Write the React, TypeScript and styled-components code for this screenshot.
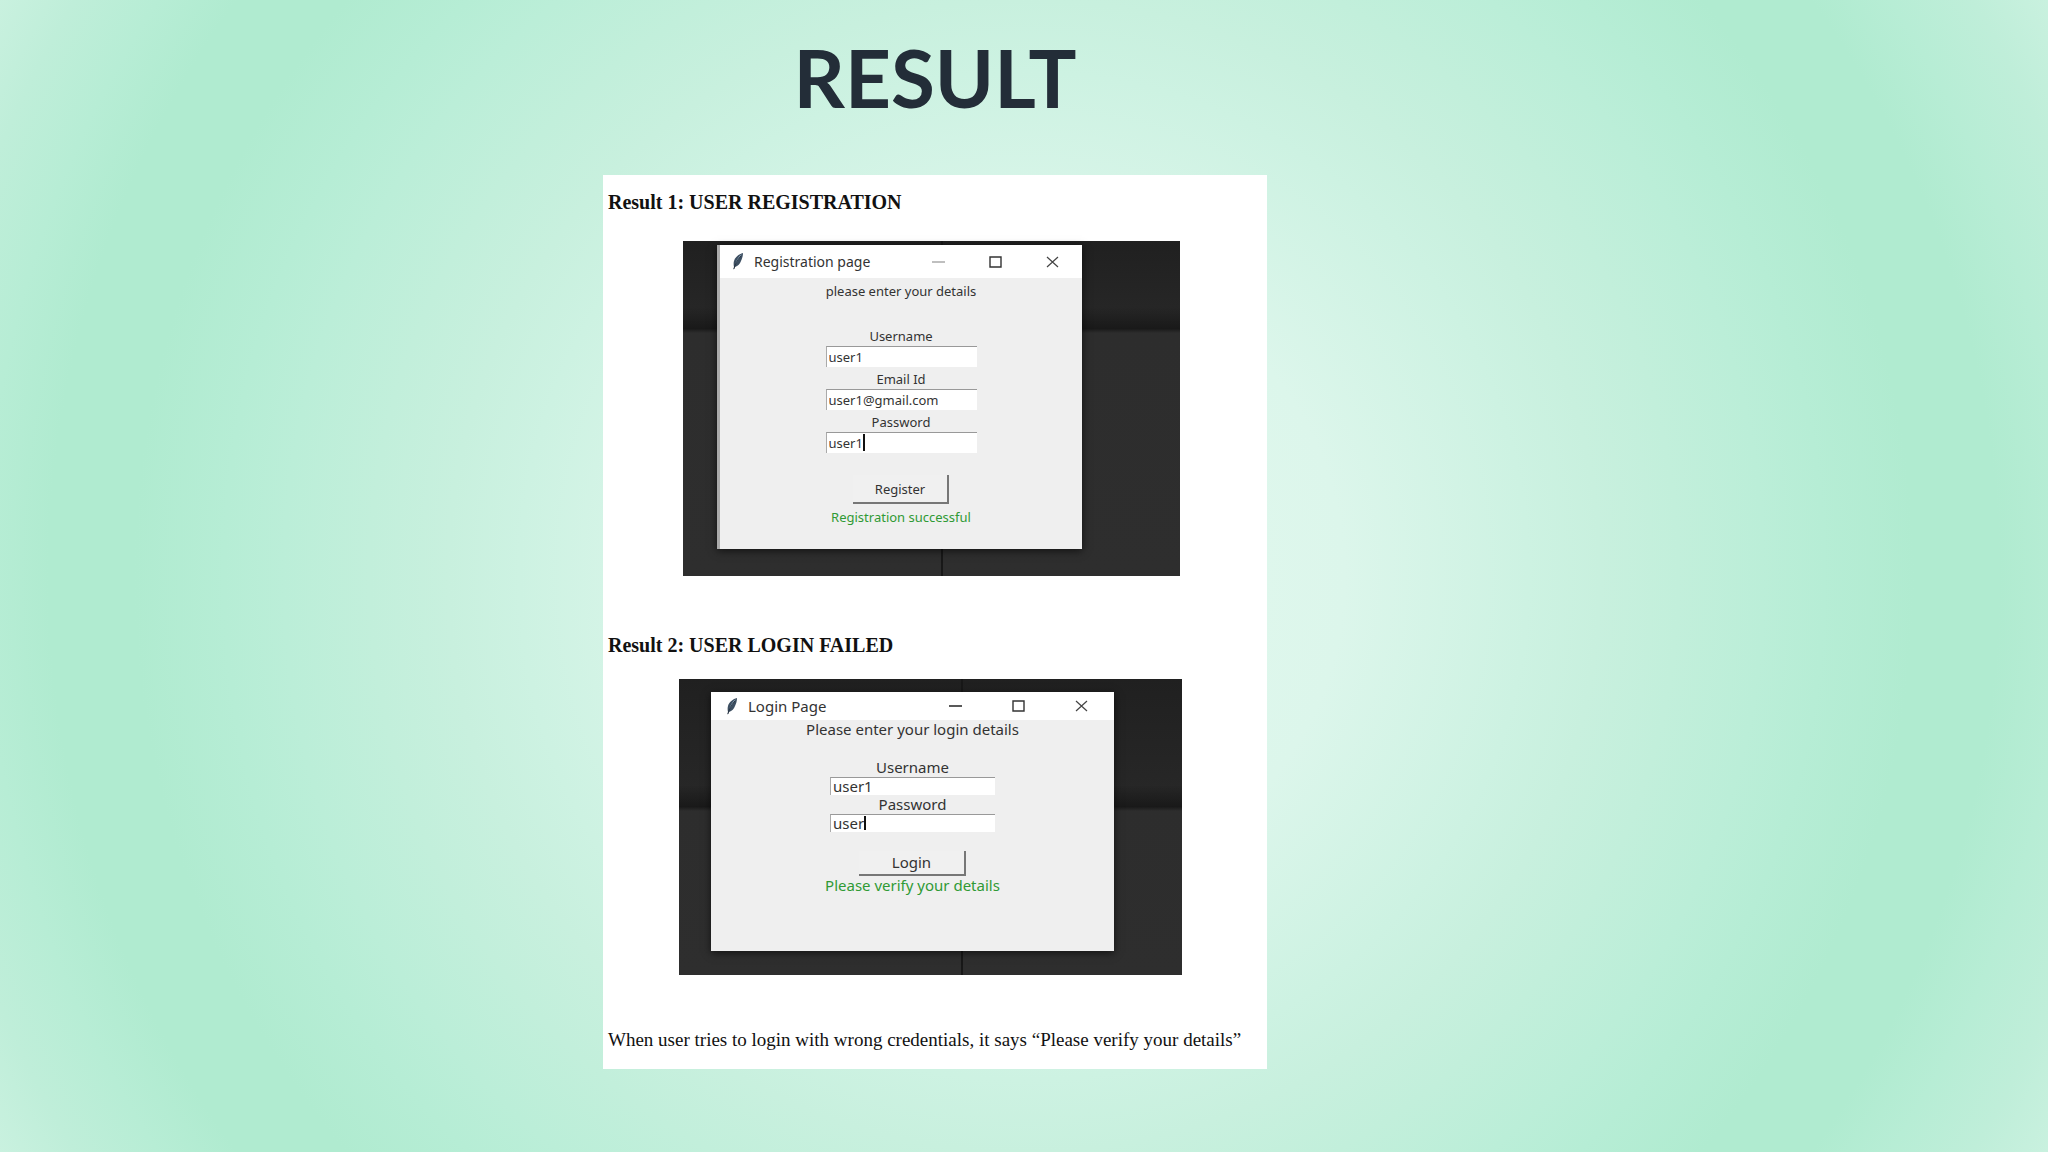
import React from "react";
import styled, { createGlobalStyle } from "styled-components";

const GlobalStyle = createGlobalStyle`
  * { box-sizing: border-box; }
  body { margin: 0; }
`;

const Slide = styled.main`
  min-height: 100vh;
  display: flex;
  flex-direction: column;
  align-items: center;
  padding: 27px 178px 83px 0;
  background: radial-gradient(
    circle at 50% 50%,
    #e4f9ef 0,
    #dcf6eb 320px,
    #cdf2e2 504px,
    #c8f0de 576px,
    #c2efdb 654px,
    #bbeed8 740px,
    #b6edd5 800px,
    #b0ebd0 890px,
    #b0ebd0 975px,
    #b7edd5 1040px,
    #bfeed9 1110px,
    #c9f1df 1175px
  );
`;

const SlideTitle = styled.h1`
  margin: 0;
  font: 700 80px/100px Lato, "Noto Sans", sans-serif;
  color: #232d38;
`;

const Paper = styled.article`
  width: 100%;
  max-width: 664px;
  margin-top: 48px;
  padding: 15px 0 17px;
  background: #fff;
  color: #111;
  font-family: "Liberation Serif", "Times New Roman", serif;
`;

const Heading = styled.h2`
  margin: 0;
  padding: 0 5px;
  font-size: 20px;
  line-height: 24px;
`;

const Note = styled.p`
  margin: 0;
  padding: 0 5px;
  font-size: 19px;
  line-height: 24px;
`;

const Figure = styled.figure<{ $pad: string }>`
  margin: 0;
  padding: ${(p) => p.$pad};
`;

const Backdrop = styled.div<{ $pad: string; $seamX: string; $seamY: string }>`
  padding: ${(p) => p.$pad};
  background:
    linear-gradient(#0000 calc(${(p) => p.$seamY} - 22px), #111a ${(p) => p.$seamY}, #0000 calc(${(p) => p.$seamY} + 4px)),
    linear-gradient(90deg, #0000 ${(p) => p.$seamX}, #181818 ${(p) => p.$seamX}, #181818 calc(${(p) => p.$seamX} + 2px), #0000 calc(${(p) => p.$seamX} + 2px)),
    linear-gradient(#202020, #282828 ${(p) => p.$seamY}, #2d2d2d ${(p) => p.$seamY}, #2e2e2e);
`;

const Window = styled.section<{ $edge: string }>`
  background: #efefef;
  border-left: ${(p) => p.$edge};
  box-shadow: 0 2px 8px #0009;
  color: #333;
`;

const TitleBar = styled.header<{ $height: string; $pad: string }>`
  display: flex;
  align-items: center;
  height: ${(p) => p.$height};
  padding: ${(p) => p.$pad};
  background: #fff;
`;

const WindowTitle = styled.h3<{ $size: string }>`
  flex: 1;
  margin: 0 0 0 10px;
  font: 400 ${(p) => p.$size}/20px "Noto Sans", sans-serif;
  white-space: nowrap;
`;

const Controls = styled.div<{ $gap: string }>`
  display: flex;
  gap: ${(p) => p.$gap};
`;

const ControlButton = styled.button<{ $color: string }>`
  display: flex;
  padding: 0;
  border: 0;
  background: none;
  color: ${(p) => p.$color};
`;

const Form = styled.form<{ $font: string; $pad: string }>`
  display: flex;
  flex-direction: column;
  align-items: center;
  padding: ${(p) => p.$pad};
  font: ${(p) => p.$font};
`;

const Prompt = styled.p<{ $gap: string }>`
  margin: 0 0 ${(p) => p.$gap};
`;

const Fields = styled.div<{ $gap: string; $width: string }>`
  display: flex;
  flex-direction: column;
  gap: ${(p) => p.$gap};
  width: ${(p) => p.$width};
`;

const Field = styled.div`
  display: flex;
  flex-direction: column;
  text-align: center;
`;

const InputWrap = styled.div`
  position: relative;
  display: flex;
`;

const Input = styled.input<{ $height: string }>`
  width: 100%;
  height: ${(p) => p.$height};
  padding: 0 2px;
  border: 0;
  border-top: 1px solid #999;
  border-left: 1px solid #aaa;
  border-radius: 0;
  outline: 0;
  background: #fff;
  color: #333;
  font: inherit;
`;

const Caret = styled.span<{ $left: string }>`
  position: absolute;
  top: 2px;
  bottom: 2px;
  left: ${(p) => p.$left};
  width: 2px;
  background: #111;
`;

const Submit = styled.button<{ $width: string; $height: string; $margin: string }>`
  width: ${(p) => p.$width};
  height: ${(p) => p.$height};
  margin: ${(p) => p.$margin};
  padding: 0;
  border: 0 solid #777;
  border-width: 0 2px 2px 0;
  background: #f0f0f0;
  color: #333;
  font: inherit;
`;

const Status = styled.output`
  color: #2f9a35;
`;

function Feather() {
  return (
    <svg width="12" height="17" viewBox="0 0 12 17" aria-hidden="true">
      <path d="M11 0C7 1 3 4 2 8c-.6 2-.4 4 0 6L1 17l2-3c3-1 5-3 6-6 1-2 2-5 2-8Z" fill="#3d4f62" />
      <path d="M10 1C7 3 4 7 3 12c2-3 4-7 7-11Z" fill="#8fa9bd" />
      <path d="M2 16C3 11 5 7 9 3" stroke="#1d2733" strokeWidth="0.8" fill="none" />
    </svg>
  );
}

function WindowControls({ gap, minimise, height }: { gap: string; minimise: string; height: number }) {
  const end = height - 1;
  return (
    <Controls $gap={gap}>
      <ControlButton type="button" aria-label="Minimise" $color={minimise}>
        <svg width="13" height={height} aria-hidden="true">
          <path d={`M0 ${height / 2}H13`} stroke="currentColor" strokeWidth="1.5" />
        </svg>
      </ControlButton>
      <ControlButton type="button" aria-label="Maximise" $color="#333">
        <svg width="13" height={height} aria-hidden="true">
          <path d={`M1 1H12V${end}H1Z`} stroke="currentColor" strokeWidth="1.4" fill="none" />
        </svg>
      </ControlButton>
      <ControlButton type="button" aria-label="Close" $color="#444">
        <svg width="13" height={height} aria-hidden="true">
          <path d={`M1 1L12 ${end}M12 1L1 ${end}`} stroke="currentColor" strokeWidth="1.2" />
        </svg>
      </ControlButton>
    </Controls>
  );
}

type TextFieldProps = { id: string; label: string; value: string; height: string; caret?: string };

function TextField({ id, label, value, height, caret }: TextFieldProps) {
  return (
    <Field>
      <label htmlFor={id}>{label}</label>
      <InputWrap>
        <Input id={id} type="text" defaultValue={value} $height={height} />
        {caret && <Caret $left={caret} />}
      </InputWrap>
    </Field>
  );
}

export default function App() {
  return (
    <>
      <GlobalStyle />
      <Slide>
        <SlideTitle>RESULT</SlideTitle>
        <Paper>
          <Heading>Result 1: USER REGISTRATION</Heading>
          <Figure $pad="27px 87px 57px 80px">
            <Backdrop $pad="4px 98px 27px 34px" $seamX="258px" $seamY="88px">
              <Window $edge="3px solid #aaa">
                <TitleBar $height="33px" $pad="0 23px 0 12px">
                  <Feather />
                  <WindowTitle $size="14px">Registration page</WindowTitle>
                  <WindowControls gap="44px" minimise="#aaa" height={12} />
                </TitleBar>
                <Form $font='400 13px/20px "Noto Sans", sans-serif' $pad="3px 0 22px" onSubmit={(e) => e.preventDefault()}>
                  <Prompt $gap="25px">please enter your details</Prompt>
                  <Fields $gap="2px" $width="151px">
                    <TextField id="reg-user" label="Username" value="user1" height="21px" />
                    <TextField id="reg-email" label="Email Id" value="user1@gmail.com" height="21px" />
                    <TextField id="reg-pass" label="Password" value="user1" height="21px" caret="37px" />
                  </Fields>
                  <Submit type="submit" $width="96px" $height="29px" $margin="22px 0 3px">Register</Submit>
                  <Status>Registration successful</Status>
                </Form>
              </Window>
            </Backdrop>
          </Figure>

          <Heading>Result 2: USER LOGIN FAILED</Heading>
          <Figure $pad="22px 85px 53px 76px">
            <Backdrop $pad="13px 68px 24px 32px" $seamX="282px" $seamY="128px">
              <Window $edge="0">
                <TitleBar $height="28px" $pad="0 26px 0 15px">
                  <Feather />
                  <WindowTitle $size="15px">Login Page</WindowTitle>
                  <WindowControls gap="50px" minimise="#222" height={12} />
                </TitleBar>
                <Form $font='400 15px/19px "Noto Sans", sans-serif' $pad="0 0 56px" onSubmit={(e) => e.preventDefault()}>
                  <Prompt $gap="19px">Please enter your login details</Prompt>
                  <Fields $gap="0" $width="165px">
                    <TextField id="login-user" label="Username" value="user1" height="18px" />
                    <TextField id="login-pass" label="Password" value="user" height="18px" caret="34px" />
                  </Fields>
                  <Submit type="submit" $width="107px" $height="25px" $margin="19px 0 0">Login</Submit>
                  <Status>Please verify your details</Status>
                </Form>
              </Window>
            </Backdrop>
          </Figure>
          <Note>When user tries to login with wrong credentials, it says “Please verify your details”</Note>
        </Paper>
      </Slide>
    </>
  );
}
